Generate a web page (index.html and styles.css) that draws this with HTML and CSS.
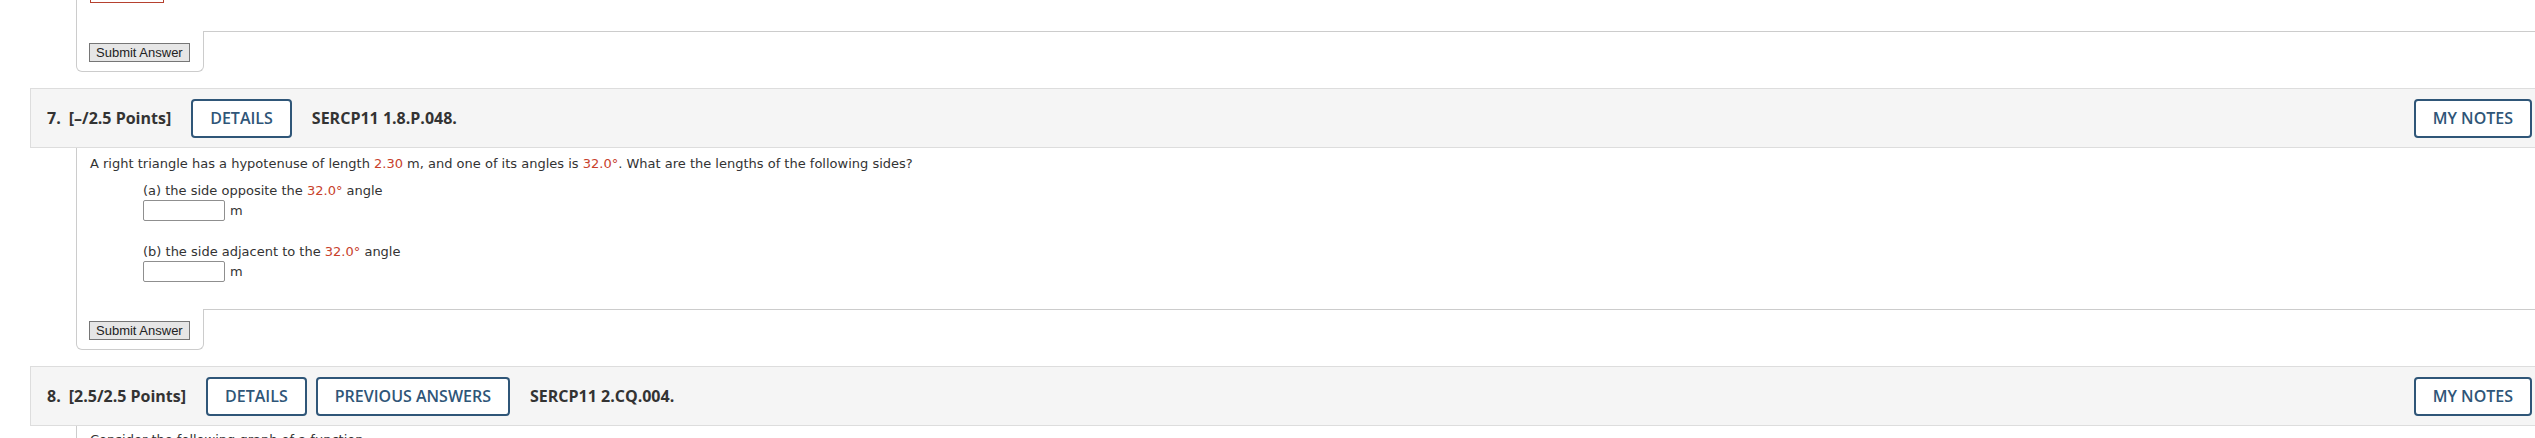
FILE: index.html
```html
<!DOCTYPE html>
<html>
<head>
<meta charset="utf-8">
<link rel="stylesheet" href="styles.css">
</head>
<body>
<div class="page">
  <div class="qcontent qcontent-prev">
    <input class="ans ans-error" type="text">
  </div>
  <div class="qfooter">
    <div class="tab"><button class="submit">Submit Answer</button></div>
    <div class="filler"></div>
  </div>

  <div class="qheader">
    <span class="qnum">7.</span>
    <span class="qpts">[–/2.5 Points]</span>
    <button class="hbtn">DETAILS</button>
    <span class="qcode">SERCP11 1.8.P.048.</span>
    <button class="hbtn notes">MY NOTES</button>
  </div>
  <div class="qcontent">
    <p class="qtext">A right triangle has a hypotenuse of length <span class="red">2.30</span> m, and one of its angles is <span class="red">32.0°</span>. What are the lengths of the following sides?</p>
    <div class="part">
      <p class="plabel">(a) the side opposite the <span class="red">32.0°</span> angle</p>
      <div class="arow"><input class="ans" type="text"><span class="unit">m</span></div>
    </div>
    <div class="part part-b">
      <p class="plabel">(b) the side adjacent to the <span class="red">32.0°</span> angle</p>
      <div class="arow"><input class="ans" type="text"><span class="unit">m</span></div>
    </div>
  </div>
  <div class="qfooter">
    <div class="tab"><button class="submit">Submit Answer</button></div>
    <div class="filler"></div>
  </div>

  <div class="qheader">
    <span class="qnum">8.</span>
    <span class="qpts">[2.5/2.5 Points]</span>
    <button class="hbtn">DETAILS</button>
    <button class="hbtn">PREVIOUS ANSWERS</button>
    <span class="qcode">SERCP11 2.CQ.004.</span>
    <button class="hbtn notes">MY NOTES</button>
  </div>
  <div class="qcontent qcontent-last">
    <p class="qtext">Consider the following graph of a function.</p>
  </div>
</div>
</body>
</html>
```

FILE: styles.css
```css
html, body {
  margin: 0;
  padding: 0;
  background: #ffffff;
  overflow: hidden;
}
.page {
  width: 2535px;
  padding-left: 30px;
  box-sizing: border-box;
  font-family: "DejaVu Sans", Verdana, sans-serif;
  color: #333333;
}
.qcontent {
  margin-left: 46px;
  border-left: 1px solid #cccccc;
  padding: 8px 0 27px 13px;
}
.qcontent-prev {
  display: flow-root;
  height: 31px;
  padding: 0 0 0 13px;
  box-sizing: border-box;
}
.qcontent-last {
  padding-top: 6px;
}
.qtext {
  margin: 0;
  font-size: 13px;
  line-height: 16px;
}
.red { color: #c8412b; }
.part {
  margin-left: 53px;
  margin-top: 11px;
}
.part-b { margin-top: 23px; }
.plabel {
  margin: 0;
  font-size: 13px;
  line-height: 16px;
}
.arow {
  display: flex;
  align-items: center;
  margin-top: 1px;
  font-size: 13px;
}
.ans {
  width: 82px;
  height: 21px;
  box-sizing: border-box;
  border: 1px solid #8f8f8f;
  border-radius: 2px;
  margin: 0;
  padding: 0;
  background: #ffffff;
}
.unit { margin-left: 5px; }
.ans-error {
  display: block;
  width: 74px;
  height: 22px;
  margin-top: -19px;
  border: 1px solid #b5412f;
  border-radius: 0;
}
.qfooter {
  display: flex;
  margin-left: 46px;
  margin-bottom: 16px;
}
.tab {
  width: 128px;
  height: 41px;
  box-sizing: border-box;
  border: 1px solid #cccccc;
  border-top: none;
  border-radius: 0 0 6px 6px;
  padding: 12px 0 0 12px;
}
.filler {
  flex: 1;
  border-top: 1px solid #cccccc;
}
.submit {
  display: block;
  height: 19px;
  padding: 0 6px;
  margin: 0;
  font-family: "Liberation Sans", Arial, sans-serif;
  font-size: 13px;
  line-height: 17px;
  color: #222222;
  background: #e6e6e6;
  border: 1px solid #767676;
  border-radius: 0;
}
.qheader {
  display: flex;
  align-items: center;
  height: 60px;
  box-sizing: border-box;
  margin-right: -10px;
  padding: 0 12px 0 16px;
  background: #f5f5f5;
  border: 1px solid #dddddd;
  font-family: "Open Sans", sans-serif;
  font-size: 16px;
  font-weight: 700;
  color: #333333;
}
.qnum { margin-right: 8px; }
.qpts { margin-right: 20px; }
.hbtn {
  height: 39px;
  box-sizing: border-box;
  padding: 0 17px;
  margin: 0 9px 0 0;
  background: #ffffff;
  border: 2px solid #2f5678;
  border-radius: 4px;
  font-family: "Open Sans", sans-serif;
  font-size: 16px;
  font-weight: 600;
  color: #2f5678;
}
.qcode { margin-left: 11px; }
.notes { margin: 0 0 0 auto; }
```
